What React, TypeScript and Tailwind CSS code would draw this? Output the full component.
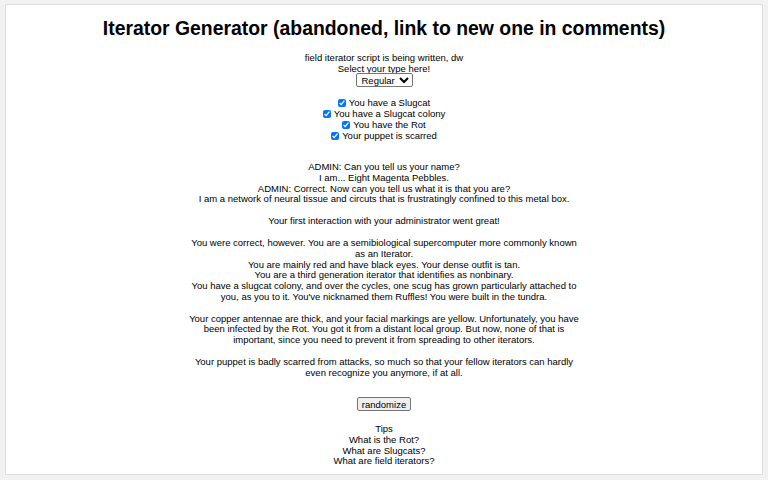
import React from "react";

const lines1 = [
  "ADMIN: Can you tell us your name?",
  "I am... Eight Magenta Pebbles.",
  "ADMIN: Correct. Now can you tell us what it is that you are?",
  "I am a network of neural tissue and circuts that is frustratingly confined to this metal box.",
];

const checks = [
  "You have a Slugcat",
  "You have a Slugcat colony",
  "You have the Rot",
  "Your puppet is scarred",
];

const font = '"Liberation Sans", Arial, sans-serif';

export default function App() {
  return (
    <div className="h-[480px] w-[768px] bg-[#f2f2f2] pt-[4px] pl-[5px] pr-[5px] pb-[5px] text-black" style={{ fontFamily: font }}>
      <div className="h-[471px] bg-white border border-[#dedede] flex flex-col items-center text-[9.5px] leading-[10.67px] text-center">
        <h1 className="mt-[11px] text-[19.4px] leading-[24px] font-bold">
          Iterator Generator (abandoned, link to new one in comments)
        </h1>
        <div className="mt-[13px]">field iterator script is being written, dw</div>
        <div>Select your type here!</div>
        <select
          defaultValue="Regular"
          className="-mt-[1px] h-[14px] text-[9.5px] leading-[11px] border border-[#767676] rounded-[2px] pl-[1px] pr-0 bg-white"
          style={{ fontFamily: font }}
        >
          <option>Regular</option>
        </select>
        <div className="mt-[10px] flex flex-col items-center">
          {checks.map((c) => (
            <label key={c} className="h-[11px] flex items-center gap-[3px]">
              <input type="checkbox" defaultChecked className="w-[8px] h-[8px] m-0 accent-[#0075ff]" />
              <span>{c}</span>
            </label>
          ))}
        </div>
        <div className="mt-[21px]">
          {lines1.map((l) => (
            <div key={l}>{l}</div>
          ))}
        </div>
        <div className="mt-[11.33px]">Your first interaction with your administrator went great!</div>
        <div className="mt-[11.33px] w-[392px]">
          You were correct, however. You are a semibiological supercomputer more commonly known as an Iterator.
          <br />
          You are mainly red and have black eyes. Your dense outfit is tan.
          <br />
          You are a third generation iterator that identifies as nonbinary.
          <br />
          You have a slugcat colony, and over the cycles, one scug has grown particularly attached to you, as you to it. You've nicknamed them Ruffles! You were built in the tundra.
        </div>
        <div className="mt-[11.33px] w-[392px]">
          Your copper antennae are thick, and your facial markings are yellow. Unfortunately, you have been infected by the Rot. You got it from a distant local group. But now, none of that is important, since you need to prevent it from spreading to other iterators.
        </div>
        <div className="mt-[11.33px] w-[392px]">
          Your puppet is badly scarred from attacks, so much so that your fellow iterators can hardly even recognize you anymore, if at all.
        </div>
        <button
          className="mt-[19px] h-[14px] px-[4px] text-[9.5px] leading-[11px] border border-[#767676] bg-[#efefef] rounded-[2px]"
          style={{ fontFamily: font }}
        >
          randomize
        </button>
        <div className="mt-[13px]">
          <div>Tips</div>
          <div>What is the Rot?</div>
          <div>What are Slugcats?</div>
          <div>What are field iterators?</div>
        </div>
      </div>
    </div>
  );
}
